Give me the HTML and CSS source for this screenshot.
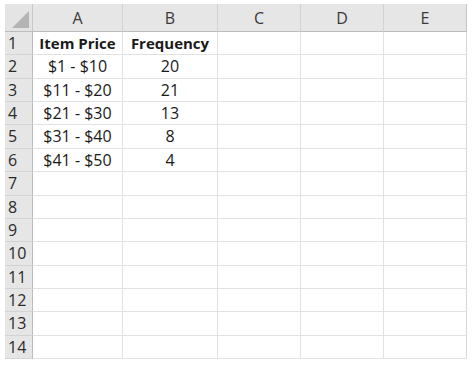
FILE: index.html
```html
<!DOCTYPE html>
<html lang="en">
<head>
<meta charset="UTF-8">
<link rel="stylesheet" href="styles.css">
<title>Sheet</title>
</head>
<body>
  <div class="sheet">
    <div class="corner"></div>
    <div class="col-head">A</div>
    <div class="col-head">B</div>
    <div class="col-head">C</div>
    <div class="col-head">D</div>
    <div class="col-head last">E</div>
  </div>
  <div class="sheet" id="rows"></div>

  <script>
    let data = [
      ["Item Price", "Frequency"],
      ["$1 - $10", "20"],
      ["$11 - $20", "21"],
      ["$21 - $30", "13"],
      ["$31 - $40", "8"],
      ["$41 - $50", "4"]
    ];
    let rows = document.getElementById("rows");
    for (let r = 1; r <= 14; r++) {
      //row number
      let num = document.createElement("div");
      num.classList.add("row-head");
      num.innerText = r;
      rows.appendChild(num);
      //cells A..E
      for (let c = 0; c < 5; c++) {
        let cell = document.createElement("div");
        cell.classList.add("cell");
        if (c == 4) cell.classList.add("last");
        if (r == 1) cell.classList.add("bold");
        let row = data[r - 1];
        if (row && c < 2) cell.innerText = row[c];
        rows.appendChild(cell);
      }
    }
  </script>
</body>
</html>
```

FILE: styles.css
```css
* {
  margin: 0;
  padding: 0;
  box-sizing: border-box;
}
body {
  background-color: #ffffff;
  padding: 4px 0 0 5px;
  font-family: "Open Sans", sans-serif;
  color: #1a1a1a;
}
.sheet {
  display: grid;
  grid-template-columns: 28px 90px 95px 83px 83px 83px;
}
#rows {
  grid-auto-rows: 23.36px;
}
.corner {
  height: 28px;
  background: #e4e4e4;
  border-right: 1px solid #c8c8c8;
  border-bottom: 1px solid #bcbcbc;
  position: relative;
}
.corner::after {
  content: "";
  position: absolute;
  right: 3px;
  bottom: 3px;
  border-left: 17px solid transparent;
  border-bottom: 17px solid #b4b4b4;
}
.col-head {
  height: 28px;
  background: #e6e6e6;
  border-right: 1px solid #d2d2d2;
  border-bottom: 1px solid #bcbcbc;
  text-align: center;
  font-size: 16px;
  line-height: 28px;
  color: #3a3a3a;
}
.col-head.last {
  border-right: 1px solid #c4c4c4;
}
.row-head {
  background: #e6e6e6;
  border-right: 1px solid #bcbcbc;
  border-bottom: 1px solid #d4d4d4;
  font-size: 16px;
  line-height: 22px;
  padding-left: 3px;
  color: #2a2a2a;
}
.cell {
  border-right: 1px solid #e2e2e2;
  border-bottom: 1px solid #e2e2e2;
  text-align: center;
  font-size: 16px;
  line-height: 22px;
}
.cell.last {
  border-right: 1px solid #d8d8d8;
}
.bold {
  font-size: 15px;
  font-weight: 700;
}
```
